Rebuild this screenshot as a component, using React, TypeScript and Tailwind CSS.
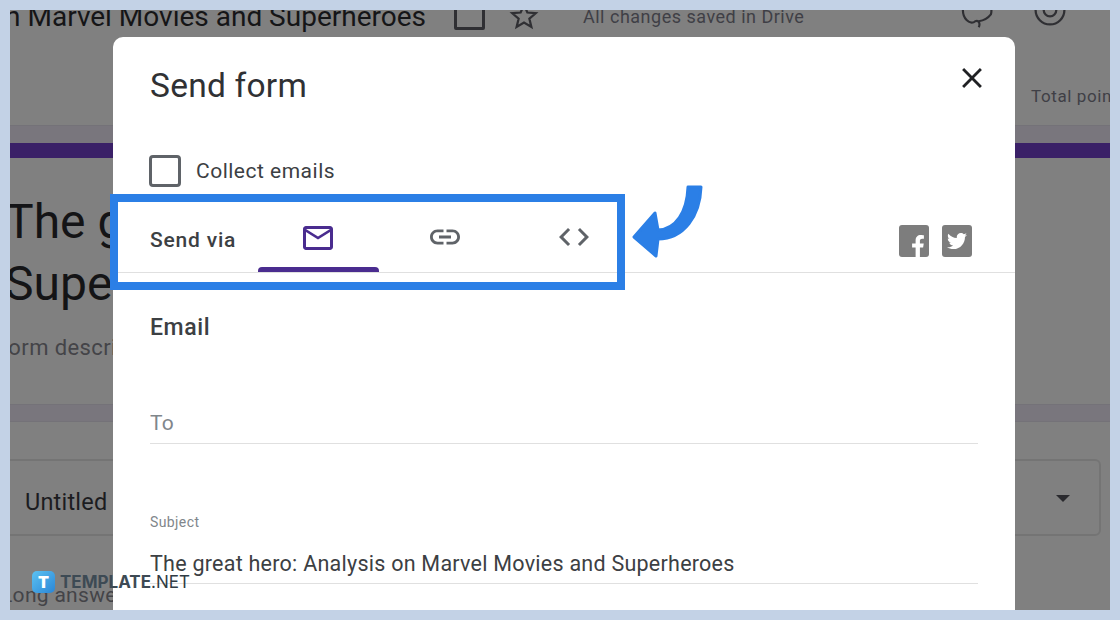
import React from 'react';
import { FaFacebookF, FaTwitter } from 'react-icons/fa';

const roboto = { fontFamily: 'Roboto, sans-serif' };

const MailIcon = () => (
  <svg viewBox="0 0 24 24" className="w-9 h-9" fill="#4a2c8f">
    <path d="M20 4H4c-1.1 0-2 .9-2 2v12c0 1.1.9 2 2 2h16c1.1 0 2-.9 2-2V6c0-1.1-.9-2-2-2zm0 14H4V8l8 5 8-5v10zm-8-7L4 6h16l-8 5z" />
  </svg>
);

const LinkIcon = () => (
  <svg viewBox="0 0 24 24" className="w-9 h-9" fill="#5f6368">
    <path d="M3.9 12c0-1.71 1.39-3.1 3.1-3.1h4V7H7c-2.76 0-5 2.24-5 5s2.24 5 5 5h4v-1.9H7c-1.71 0-3.1-1.39-3.1-3.1zM8 13h8v-2H8v2zm9-6h-4v1.9h4c1.71 0 3.1 1.39 3.1 3.1s-1.39 3.1-3.1 3.1h-4V17h4c2.76 0 5-2.24 5-5s-2.24-5-5-5z" />
  </svg>
);

const CodeIcon = () => (
  <svg viewBox="0 0 24 24" className="w-9 h-9" fill="#5f6368">
    <path d="M9.4 16.6L4.8 12l4.6-4.6L8 6l-6 6 6 6 1.4-1.4zm5.2 0l4.6-4.6-4.6-4.6L16 6l6 6-6 6-1.4-1.4z" />
  </svg>
);

const CloseIcon = () => (
  <svg viewBox="0 0 24 24" className="w-[34px] h-[34px]" fill="#202124">
    <path d="M19 6.41L17.59 5 12 10.59 6.41 5 5 6.41 10.59 12 5 17.59 6.41 19 12 13.41 17.59 19 19 17.59 13.41 12z" />
  </svg>
);

const Arrow = () => (
  <svg viewBox="0 0 74 76" className="w-[74px] h-[76px]" fill="#2b7fe6" stroke="#2b7fe6" strokeWidth="3" strokeLinejoin="round">
    <path d="M58 3 L71 3 C70 32 54 55 28 55 L26 72 L4 53 L25 29 L28 46 C46 45 57 28 58 3 Z" />
  </svg>
);

const Backdrop = () => (
  <div className="w-full h-full flex flex-col overflow-hidden bg-[#808080] text-[#1c1c1f]">
    <div className="h-[115px] shrink-0 relative">
      <div className="flex items-start h-[40px] -mt-[10px]">
        <div className="w-[416px] shrink-0 overflow-hidden flex justify-end whitespace-nowrap text-[28px] leading-[34px] text-[#151517]">
          The great hero: Analysis on Marvel Movies and Superheroes
        </div>
        <div className="ml-[28px] mt-[5px] w-[31px] h-[25px] border-[3px] border-[#2f2f33] rounded-[2px] shrink-0" />
        <svg viewBox="0 0 24 24" className="ml-[24px] mt-[1px] w-[30px] h-[30px] shrink-0" fill="none" stroke="#2f2f33" strokeWidth="1.8">
          <path d="M12 3l2.7 6.2 6.7.6-5.1 4.4 1.6 6.6L12 17.3l-5.9 3.5 1.6-6.6-5.1-4.4 6.7-.6z" />
        </svg>
        <span className="ml-[44px] mt-[5px] text-[18px] leading-[24px] tracking-[0.5px] text-[#3f3f46] whitespace-nowrap">All changes saved in Drive</span>
      </div>
      <svg viewBox="0 0 40 30" className="absolute left-[947px] top-0 w-[40px] h-[26px]" fill="none" stroke="#2f2f33" strokeWidth="2.5">
        <path d="M4 -4 C2 10 12 18 18 13 C22 11 24 16 22 20 M22 13 C28 12 33 9 36 5 C37 2 37 0 36 -4" />
      </svg>
      <svg viewBox="0 0 40 20" className="absolute left-[1022px] top-0 w-[36px] h-[18px]" fill="none" stroke="#2f2f33" strokeWidth="2.5">
        <circle cx="20" cy="0" r="16" />
        <circle cx="20" cy="0" r="7" />
      </svg>
      <span className="absolute left-[1021px] top-[74px] text-[17px] leading-[24px] text-[#3f3f46] tracking-[0.6px] whitespace-nowrap">Total points: 0</span>
    </div>
    <div className="h-[18px] shrink-0 bg-[#79767d] border-t border-[#747278]" />
    <div className="h-[15px] shrink-0 bg-[#3a2067]" />
    <div className="h-[246px] shrink-0 pt-[33px]">
      <div className="text-[48px] leading-[62px] -ml-[5px] w-[900px] text-[#141416] whitespace-nowrap">
        The great hero: Analysis on Marvel Movies and<br />Superheroes
      </div>
      <div className="text-[22px] leading-[28px] mt-[19px] -ml-[14px] tracking-[0.4px] text-[#444448] whitespace-nowrap">Form description</div>
    </div>
    <div className="h-[18px] shrink-0 bg-[#79767d] border-y border-[#747278]" />
    <div className="h-[37px] shrink-0" />
    <div className="h-[77px] shrink-0 ml-[-8px] mr-[9px] border-2 border-[#747474] rounded-[6px] flex items-center justify-between pl-[21px] pr-[29px]">
      <span className="text-[23.5px] text-[#1c1c1f] tracking-[0.2px] pt-[10px] whitespace-nowrap">Untitled Question</span>
      <div className="w-0 h-0 mt-[1px] border-x-[7px] border-x-transparent border-t-[7px] border-t-[#2a2a2e]" />
    </div>
    <div className="pt-[46px] text-[21px] leading-[26px] -ml-[9px] text-[#444448] tracking-[0.3px] whitespace-nowrap">Long answer</div>
  </div>
);

const Modal = () => (
  <div className="absolute left-[103px] top-[27px] w-[902px] h-[573px] bg-white rounded-t-[10px] text-[#202124] flex flex-col">
    <div className="h-[99px] shrink-0 pl-[37px] pr-[26px] pt-[27px] flex items-start justify-between">
      <h2 className="text-[33.5px] leading-[44px] tracking-[0.25px] text-[#303134]">Send form</h2>
      <div className="-mt-[3px]"><CloseIcon /></div>
    </div>
    <label className="h-[52px] shrink-0 pl-[36px] flex items-start pt-[19px] gap-[15px]">
      <span className="w-[32px] h-[32px] border-[3px] border-[#5f6368] rounded-[4px] shrink-0" />
      <span className="text-[21px] leading-[32px] tracking-[0.5px] text-[#3c4043]">Collect emails</span>
    </label>
    <div className="h-[85px] shrink-0 border-b border-[#e0e0e0] flex pl-[37px] pr-[43px] items-end">
      <span className="w-[108px] shrink-0 self-center mt-[20px] text-[21px] font-medium leading-[28px] tracking-[0.8px] text-[#3c4043] whitespace-nowrap">Send via</span>
      <div className="w-[121px] h-[100%] flex flex-col items-center justify-end shrink-0">
        <div className="mb-[11px] -ml-[2px]"><MailIcon /></div>
        <div className="w-full h-[5px] bg-[#4a2c8f] rounded-t-[4px]" />
      </div>
      <div className="w-[132px] flex justify-center shrink-0 mb-[17px]"><LinkIcon /></div>
      <div className="w-[126px] flex justify-center shrink-0 mb-[17px]"><CodeIcon /></div>
      <div className="ml-auto flex gap-[13px] mb-[15px]">
        <div className="w-[30px] h-[32px] bg-[#7d7d7d] rounded-[3px] flex items-end justify-center"><FaFacebookF className="text-white text-[22px] ml-[8px]" /></div>
        <div className="w-[30px] h-[32px] bg-[#7d7d7d] rounded-[3px] flex items-center justify-center"><FaTwitter className="text-white text-[20px]" /></div>
      </div>
    </div>
    <div className="pl-[37px] pr-[37px] pt-[40px] flex flex-col">
      <div className="text-[23px] leading-[30px] font-medium tracking-[0.6px] text-[#3c4043]">Email</div>
      <div className="mt-[64px] h-[37px] border-b border-[#e0e0e0] pt-[1px] text-[21px] leading-[30px] tracking-[0.3px] text-[#80868b]">To</div>
      <div className="mt-[68px] text-[14px] leading-[20px] tracking-[0.4px] text-[#80868b]">Subject</div>
      <div className="mt-[14px] h-[38px] border-b border-[#e0e0e0] pt-[3px] text-[21.5px] leading-[30px] tracking-[0.25px] text-[#3c4043] whitespace-nowrap">
        The great hero: Analysis on Marvel Movies and Superheroes
      </div>
    </div>
  </div>
);

const Watermark = () => (
  <div className="absolute left-[22px] top-[561px] flex items-center gap-[5px]">
    <div className="w-[23px] h-[22px] rounded-[5px] bg-gradient-to-br from-[#5cc2f2] to-[#2b86d6] flex items-center justify-center text-white text-[16px] font-black leading-none" style={{ fontFamily: 'Inter, sans-serif' }}>
      T
    </div>
    <span className="text-[17px] leading-[22px] text-[#3d4a54] font-bold whitespace-nowrap" style={{ fontFamily: 'Inter, sans-serif' }}>
      TEMPLATE<span className="font-normal text-[#2f3b44]">.NET</span>
    </span>
  </div>
);

export default function App() {
  return (
    <div className="w-[1120px] h-[620px] bg-[#c3d2e6] p-[10px]" style={roboto}>
      <div className="relative w-[1100px] h-[600px] overflow-hidden">
        <Backdrop />
        <Modal />
        <div className="absolute left-[100px] top-[184px] w-[515px] h-[96px] border-[8px] border-[#2b7fe6]" />
        <div className="absolute left-[620px] top-[174px]"><Arrow /></div>
        <Watermark />
      </div>
    </div>
  );
}
